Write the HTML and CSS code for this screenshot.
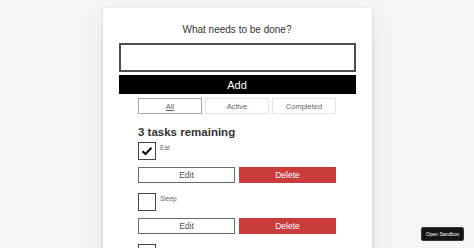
FILE: index.html
```html
<!DOCTYPE html>
<html lang="en">
<head>
    <meta charset="UTF-8">
    <meta name="viewport" content="width=device-width, initial-scale=1.0">
    <title>Todo</title>
    <link rel="stylesheet" href="styles.css">
</head>
<body>
    <div class="todoapp">
        <form class="add-form">
            <h2 class="label-wrapper">
                <label for="new-todo-input" class="label-lg">What needs to be done?</label>
            </h2>
            <input type="text" id="new-todo-input" class="input-lg" autocomplete="off">
            <button type="button" class="btn btn-primary btn-lg">Add</button>
        </form>

        <div class="filters btn-group">
            <button type="button" class="btn toggle-btn pressed"><span class="active-label">All</span></button>
            <button type="button" class="btn toggle-btn">Active</button>
            <button type="button" class="btn toggle-btn">Completed</button>
        </div>

        <h2 class="list-heading">3 tasks remaining</h2>

        <ul class="todo-list">
            <li class="todo">
                <div class="c-cb">
                    <span class="cb-box checked">
                        <svg width="12" height="10" viewBox="0 0 12 10"><path d="M1.5 5.2 L4.5 8 L10.5 1.8" fill="none" stroke="#0b0c0c" stroke-width="2"/></svg>
                    </span>
                    <label class="todo-label">Eat</label>
                </div>
                <div class="btn-group">
                    <button type="button" class="btn">Edit</button>
                    <button type="button" class="btn btn-danger">Delete</button>
                </div>
            </li>
            <li class="todo">
                <div class="c-cb">
                    <span class="cb-box"></span>
                    <label class="todo-label">Sleep</label>
                </div>
                <div class="btn-group">
                    <button type="button" class="btn">Edit</button>
                    <button type="button" class="btn btn-danger">Delete</button>
                </div>
            </li>
            <li class="todo">
                <div class="c-cb">
                    <span class="cb-box"></span>
                </div>
            </li>
        </ul>
    </div>

    <a href="#" class="sandbox-btn">Open Sandbox</a>
</body>
</html>
```

FILE: styles.css
```css
* {
    box-sizing: border-box;
}

body {
    margin: 0;
    background-color: #f5f5f5;
    font-family: Arial, "Liberation Sans", sans-serif;
    color: #4d4d4d;
    height: 100vh;
    overflow: hidden;
}

.todoapp {
    width: 269px;
    margin: 8px auto 0;
    background: #fff;
    padding: 14px 16px 40px;
    box-shadow: 0 1px 3px rgba(0, 0, 0, 0.15), 0 10px 24px rgba(0, 0, 0, 0.08);
}

.label-wrapper {
    margin: 0;
    text-align: center;
    font-weight: normal;
    font-size: 10px;
    line-height: 16px;
    color: #333;
}

.input-lg {
    display: block;
    width: 100%;
    height: 29px;
    margin-top: 5px;
    border: 2px solid #4d4d4d;
    padding: 0 6px;
    font-size: 11px;
}

.btn {
    font-family: Arial, "Liberation Sans", sans-serif;
    background: #fff;
    border: 1.5px solid #6b6b6b;
    color: #555;
    font-size: 8.5px;
    padding: 0;
    cursor: pointer;
}

.btn-primary {
    display: block;
    width: 100%;
    height: 19px;
    margin-top: 3px;
    background: #000;
    border-color: #000;
    color: #fff;
    font-size: 11px;
}

.btn-group {
    display: flex;
    justify-content: space-between;
}

.filters {
    width: 198px;
    margin: 4px auto 0;
}

.toggle-btn {
    width: 64px;
    height: 16px;
    border: 1px solid #e4e4e4;
    color: #666;
    font-size: 7.5px;
}

.toggle-btn.pressed {
    border-color: #a8a8a8;
}

.active-label {
    text-decoration: underline;
}

.list-heading {
    width: 198px;
    margin: 10px auto 0;
    font-size: 11.5px;
    line-height: 16px;
    color: #333;
}

.todo-list {
    list-style: none;
    width: 198px;
    margin: 2px auto 0;
    padding: 0;
}

.todo {
    margin-bottom: 10px;
}

.c-cb {
    display: flex;
    align-items: flex-start;
    height: 18px;
}

.cb-box {
    width: 18px;
    height: 18px;
    border: 1.5px solid #444;
    display: flex;
    align-items: center;
    justify-content: center;
}

.todo-label {
    margin-left: 4px;
    margin-top: 2px;
    font-size: 6.5px;
    color: #666;
}

.todo .btn-group {
    margin-top: 7px;
}

.todo .btn {
    width: 97px;
    height: 16px;
}

.btn-danger {
    background: #ca3c3c;
    border-color: #ca3c3c;
    color: #fff;
}

.sandbox-btn {
    position: fixed;
    right: 10px;
    bottom: 7px;
    width: 43px;
    height: 14px;
    background: #151515;
    border: 1px solid #3a3a3a;
    border-radius: 2px;
    color: #fff;
    font-size: 5px;
    line-height: 12px;
    text-align: center;
    text-decoration: none;
}
```
